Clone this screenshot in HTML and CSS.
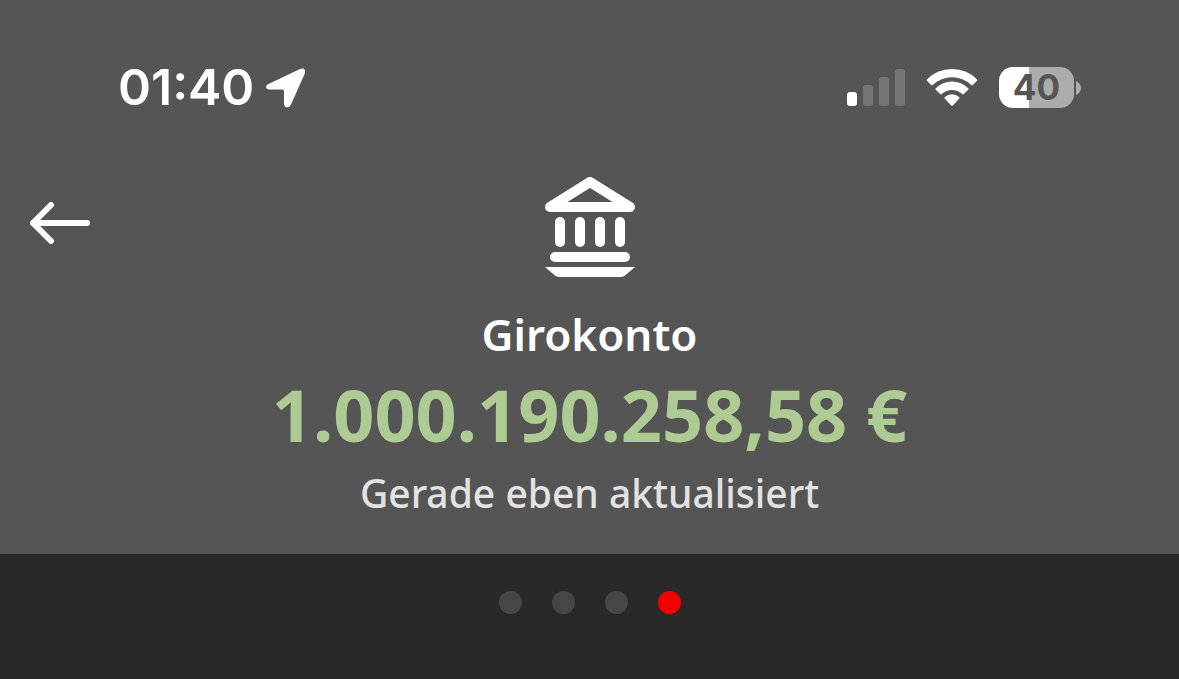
FILE: index.html
```html
<!DOCTYPE html>
<html lang="de">
<head>
  <meta charset="UTF-8" />
  <meta name="viewport" content="width=device-width, initial-scale=1.0" />
  <title>Girokonto</title>
  <link rel="stylesheet" href="styles.css">
</head>
<body>

  <header class="account">
    <div class="status-bar">
      <div class="status-left">
        <span class="clock">01:40</span>
        <svg class="location" width="40" height="40" viewBox="0 0 40 40" aria-hidden="true">
          <path d="M2 16.2 L33.5 1.2 Q40.5 -1.4 38.6 6 L25 36.500 Q23.800 39.200 21.200 39.200 Q18 39 18 35.500 V23.200 Q18 21.600 16.400 21.600 H3.500 Q.2 21.400 0 19 Q0 17.200 2 16.2Z" fill="#fff"/>
        </svg>
      </div>
      <div class="status-right">
        <svg width="58" height="38" viewBox="0 0 58 38" aria-hidden="true">
          <rect x="0" y="23" width="10" height="14" rx="3" fill="#fff"/>
          <rect x="16" y="16" width="10" height="21" rx="3" fill="#757575"/>
          <rect x="32" y="8" width="10" height="29" rx="3" fill="#757575"/>
          <rect x="48" y="0" width="10" height="37" rx="3" fill="#757575"/>
        </svg>
        <svg class="wifi" width="52" height="38" viewBox="0 0 52 38" aria-hidden="true">
          <g fill="#fff">
            <path d="M1 10.2 Q11.5 0 26 0 T51 10.2 Q51.8 11 51 11.8 L46.8 15.9 Q46 16.6 45.2 15.9 Q37 8.2 26 8.2 T6.8 15.9 Q6 16.6 5.2 15.9 L1 11.8 Q.2 11 1 10.2Z"/>
            <path d="M9.8 19.2 Q16.7 12.6 26 12.6 T42.2 19.2 Q43 20 42.2 20.8 L37.8 25.1 Q37 25.8 36.2 25.1 Q31.8 21 26 21 T15.8 25.1 Q15 25.8 14.2 25.1 L9.8 20.8 Q9 20 9.8 19.2Z"/>
            <path d="M18.9 28 Q22 25.2 26 25.2 T33.1 28 Q34 28.9 33.1 29.8 L26.8 36.4 Q26 37.2 25.2 36.4 L18.9 29.8 Q18 28.9 18.9 28Z"/>
          </g>
        </svg>
        <div class="battery">
          <span class="battery-level">40</span>
          <svg width="6" height="14" viewBox="0 0 6 14" aria-hidden="true">
            <path d="M0 0 Q5 2.5 5 7 T0 14Z" fill="#acacac"/>
          </svg>
        </div>
      </div>
    </div>

    <div class="nav">
      <button class="back" type="button" aria-label="Zurück">
        <svg width="60" height="42" viewBox="0 0 60 42" fill="none" stroke="#fff" stroke-width="6" stroke-linecap="round" stroke-linejoin="round">
          <path d="M21 3 L3 21 L21 39 M3 21 H57"/>
        </svg>
      </button>
      <svg class="bank" width="90" height="100" viewBox="0 0 90 100" aria-hidden="true">
        <path d="M45 5 L85 30 H5Z" fill="none" stroke="#fff" stroke-width="10" stroke-linejoin="round"/>
        <g fill="#fff">
          <rect x="10" y="40" width="10" height="30" rx="5"/>
          <rect x="30" y="40" width="10" height="30" rx="5"/>
          <rect x="50" y="40" width="10" height="30" rx="5"/>
          <rect x="70" y="40" width="10" height="30" rx="5"/>
          <rect x="5" y="75" width="80" height="10" rx="5"/>
          <path d="M0 90 H90 L80 98.5 Q78 100 75 100 H15 Q12 100 10 98.5Z"/>
        </g>
      </svg>
    </div>

    <h1 class="name">Girokonto</h1>
    <p class="amount">1.000.190.258,58 €</p>
    <p class="updated">Gerade eben aktualisiert</p>
  </header>

  <nav class="dots" aria-label="Konten">
    <button class="dot" type="button" aria-label="Konto 1"></button>
    <button class="dot" type="button" aria-label="Konto 2"></button>
    <button class="dot" type="button" aria-label="Konto 3"></button>
    <button class="dot active" type="button" aria-label="Konto 4" aria-current="true"></button>
  </nav>

</body>
</html>
```
FILE: styles.css
```css
* {
  margin: 0;
  padding: 0;
  box-sizing: border-box;
}
body {
  font-family: 'Noto Sans', 'Open Sans', sans-serif;
  background: #292929;
  color: #fff;
  min-height: 100vh;
}
svg {
  display: block;
}
button {
  border: none;
  background: none;
  cursor: pointer;
}
.account {
  background: #555;
  padding: 67px 0 32px;
  text-align: center;
}
.status-bar {
  display: flex;
  justify-content: space-between;
  align-items: center;
  height: 41px;
  padding: 0 97px 0 118px;
  font-family: Inter, 'Liberation Sans', sans-serif;
}
.status-left,
.status-right,
.battery {
  display: flex;
  align-items: center;
}
.status-left {
  gap: 12px;
}
.status-right {
  gap: 21px;
}
.clock {
  font-size: 50px;
  font-weight: 600;
  line-height: 43px;
}
.battery {
  gap: 2px;
}
.battery-level {
  width: 75px;
  border-radius: 14px;
  background: linear-gradient(90deg, #fff 40%, #acacac 40%);
  color: #555;
  font-size: 35px;
  font-weight: 700;
  line-height: 41px;
}
.nav {
  display: grid;
  grid-template-columns: 1fr auto 1fr;
  align-items: start;
  margin-top: 69px;
  padding: 0 30px;
}
.back {
  justify-self: start;
  padding-top: 25px;
}
.name {
  margin-top: 27px;
  font-size: 44px;
  font-weight: 600;
  line-height: 60px;
}
.amount {
  color: #adcb92;
  font-size: 72px;
  font-weight: 700;
  line-height: 100px;
}
.updated {
  color: #e2e2e2;
  font-size: 39px;
  font-weight: 500;
  line-height: 58px;
}
.dots {
  display: flex;
  justify-content: center;
  gap: 30px;
  padding: 37px 0;
}
.dot {
  width: 23px;
  height: 23px;
  border-radius: 50%;
  background: #464646;
}
.dot.active {
  background: #f20000;
}
```
